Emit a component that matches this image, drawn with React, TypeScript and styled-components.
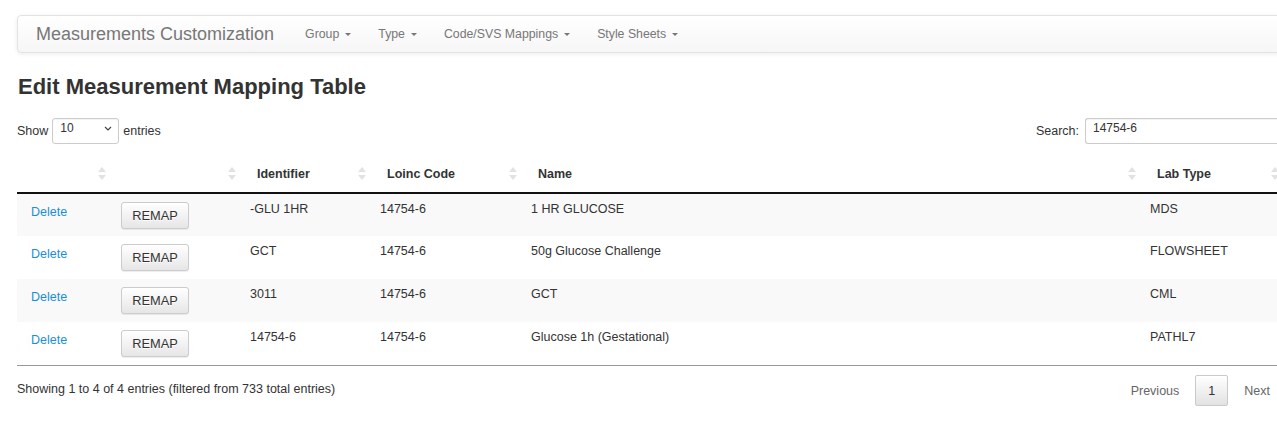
import React from "react";
import styled, { createGlobalStyle } from "styled-components";

const Global = createGlobalStyle`
  html, body { margin: 0; padding: 0; background: #fff; overflow: hidden; }
  body { font-family: "Liberation Sans", Arial, Helvetica, sans-serif; color: #333; font-size: 12.5px; }
`;

const Page = styled.div`
  width: 1266px;
  padding: 15px 0 0 17px;
`;

const Navbar = styled.nav`
  display: flex;
  align-items: center;
  height: 36px;
  border: 1px solid #e3e3e3;
  border-radius: 4px;
  background-image: linear-gradient(to bottom, #fff 0, #f6f6f6 100%);
  box-shadow: inset 0 1px 0 rgba(255,255,255,.15), 0 1px 4px rgba(0,0,0,.08);
  padding-left: 18px;
`;

const Brand = styled.span`
  font-size: 18px;
  color: #777;
  margin-right: 31px;
`;

const NavItem = styled.span`
  font-size: 12.3px;
  color: #777;
  margin-right: 27px;
  display: inline-flex;
  align-items: center;
`;

const Caret = styled.span`
  display: inline-block;
  width: 0;
  height: 0;
  margin-left: 6px;
  border-top: 3px solid #777;
  border-left: 3px solid transparent;
  border-right: 3px solid transparent;
`;

const Title = styled.h3`
  font-size: 22px;
  font-weight: bold;
  margin: 21px 0 0 1px;
  line-height: 26px;
`;

const Controls = styled.div`
  display: flex;
  justify-content: space-between;
  align-items: center;
  margin-top: 17px;
  height: 28px;
`;

const Label = styled.label`
  display: flex;
  align-items: center;
  font-size: 12.5px;
  color: #333;
`;

const SelectBox = styled.div`
  width: 67px;
  height: 26px;
  border: 1px solid #ccc;
  border-radius: 3px;
  margin: 0 4px 0 4px;
  display: flex;
  justify-content: space-between;
  padding: 0 6px 0 7px;
  box-sizing: border-box;
  font-size: 12px;
  line-height: 19px;
  box-shadow: inset 0 1px 1px rgba(0,0,0,.05);
`;

const SearchInput = styled.div`
  width: 198px;
  height: 26px;
  border: 1px solid #ccc;
  border-right: none;
  border-radius: 3px 0 0 3px;
  margin-left: 6px;
  padding-left: 7px;
  box-sizing: border-box;
  font-size: 12px;
  line-height: 19px;
  box-shadow: inset 0 1px 1px rgba(0,0,0,.05);
`;

const Table = styled.table`
  width: 100%;
  border-collapse: collapse;
  margin-top: 11px;
  table-layout: fixed;
`;

const Th = styled.th<{ $w?: number }>`
  ${(p) => (p.$w ? `width: ${p.$w}px;` : "")}
  box-sizing: border-box;
  position: relative;
  text-align: left;
  font-size: 12.5px;
  font-weight: bold;
  height: 37px;
  padding: 0 20px 1px 17px;
  border-bottom: 2px solid #111;
`;

const SortIcon = styled.svg`
  position: absolute;
  right: 4px;
  top: 11px;
`;

const Tr = styled.tr<{ $striped: boolean }>`
  background: ${(p) => (p.$striped ? "#f9f9f9" : "#fff")};
  & + & td { border-top: 1px solid #ddd; }
`;

const Td = styled.td<{ $pl?: number }>`
  vertical-align: top;
  height: 42.9px;
  padding: 7px 8px 0 ${(p) => p.$pl ?? 10}px;
  font-size: 12.5px;
  line-height: 17px;
  box-sizing: border-box;
`;

const LinkCell = styled.a`
  color: #1a8fd6;
  text-decoration: none;
  display: inline-block;
  margin-top: 3px;
`;

const Button = styled.button`
  width: 68px;
  height: 27px;
  font-family: inherit;
  font-size: 12.8px;
  color: #333;
  border: 1px solid #ccc;
  border-radius: 3px;
  background-image: linear-gradient(to bottom, #fff 0, #e6e6e6 100%);
  box-shadow: inset 0 1px 0 rgba(255,255,255,.15), 0 1px 1px rgba(0,0,0,.075);
  text-shadow: 0 1px 0 #fff;
  margin-top: 1px;
  padding: 0;
`;

const TableBottom = styled.div`
  border-top: 1px solid #999;
`;

const Footer = styled.div`
  display: flex;
  justify-content: space-between;
  align-items: center;
  margin-top: 9px;
  height: 33px;
`;

const Info = styled.span`
  font-size: 12.5px;
  margin-top: -4px;
`;

const Pager = styled.div`
  display: flex;
  align-items: center;
  padding-right: 13px;
  margin-top: -1px;
`;

const PageLink = styled.span<{ $active?: boolean }>`
  font-size: 12.5px;
  color: ${(p) => (p.$active ? "#333" : "#666")};
  ${(p) =>
    p.$active
      ? `
    width: 33px; height: 31px; box-sizing: border-box;
    display: inline-flex; align-items: center; justify-content: center;
    border: 1px solid #cacaca; border-radius: 2px;
    background-image: linear-gradient(to bottom, #fff 0, #e2e2e2 100%);
    margin: 0 16px;
  `
      : ""}
`;

const Sort = () => (
  <SortIcon width="8" height="13" viewBox="0 0 8 13">
    <path d="M4 0 L8 5 L0 5 Z" fill="#e2e2e2" />
    <path d="M4 13 L8 8 L0 8 Z" fill="#e2e2e2" />
  </SortIcon>
);

const rows = [
  ["-GLU 1HR", "14754-6", "1 HR GLUCOSE", "MDS"],
  ["GCT", "14754-6", "50g Glucose Challenge", "FLOWSHEET"],
  ["3011", "14754-6", "GCT", "CML"],
  ["14754-6", "14754-6", "Glucose 1h (Gestational)", "PATHL7"],
];

export default function App() {
  return (
    <>
      <Global />
      <Page>
        <Navbar>
          <Brand>Measurements Customization</Brand>
          {["Group", "Type", "Code/SVS Mappings", "Style Sheets"].map((n) => (
            <NavItem key={n}>
              {n}
              <Caret />
            </NavItem>
          ))}
        </Navbar>
        <Title>Edit Measurement Mapping Table</Title>
        <Controls>
          <Label>
            Show
            <SelectBox>
              <span>10</span>
              <svg width="8" height="19" viewBox="0 0 8 19">
                <path d="M1 8 L4 11 L7 8" stroke="#444" strokeWidth="1.2" fill="none" />
              </svg>
            </SelectBox>
            entries
          </Label>
          <Label>
            Search:
            <SearchInput>14754-6</SearchInput>
          </Label>
        </Controls>
        <Table>
          <thead>
            <tr>
              <Th $w={93}>
                <Sort />
              </Th>
              <Th $w={130}>
                <Sort />
              </Th>
              <Th $w={130}>
                Identifier
                <Sort />
              </Th>
              <Th $w={151}>
                Loinc Code
                <Sort />
              </Th>
              <Th>
                Name
                <Sort />
              </Th>
              <Th $w={143}>
                Lab Type
                <Sort />
              </Th>
            </tr>
          </thead>
          <tbody>
            {rows.map((r, i) => (
              <Tr key={i} $striped={i % 2 === 0}>
                <Td $pl={14}>
                  <LinkCell href="#">Delete</LinkCell>
                </Td>
                <Td $pl={11}>
                  <Button>REMAP</Button>
                </Td>
                <Td>{r[0]}</Td>
                <Td>{r[1]}</Td>
                <Td>{r[2]}</Td>
                <Td>{r[3]}</Td>
              </Tr>
            ))}
          </tbody>
        </Table>
        <TableBottom />
        <Footer>
          <Info>Showing 1 to 4 of 4 entries (filtered from 733 total entries)</Info>
          <Pager>
            <PageLink>Previous</PageLink>
            <PageLink $active>1</PageLink>
            <PageLink>Next</PageLink>
          </Pager>
        </Footer>
      </Page>
    </>
  );
}
